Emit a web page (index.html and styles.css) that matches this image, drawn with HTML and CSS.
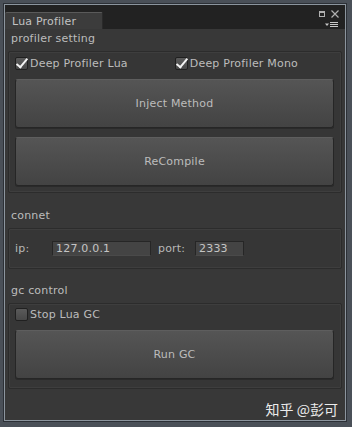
FILE: index.html
```html
<!DOCTYPE html>
<html lang="en">
<head>
    <meta charset="UTF-8">
    <title>Lua Profiler</title>
    <link rel="stylesheet" href="styles.css">
</head>
<body>
    <div class="window">
        <div class="header">
            <div class="tab">Lua Profiler</div>
            <div class="controls">
                <div class="ctrl-top">
                    <span class="max-box"></span>
                    <svg class="close" width="8" height="8" viewBox="0 0 8 8"><path d="M0.5 0.5 L7.5 7.5 M7.5 0.5 L0.5 7.5" stroke="#b0b0b0" stroke-width="1.2"/></svg>
                </div>
                <svg class="menu" width="14" height="6" viewBox="0 0 14 6"><path d="M0 1.5 L4 1.5 L2 4 Z" fill="#c8c8c8"/><path d="M5 0.5 H13 M5 2.5 H13 M5 4.5 H13" stroke="#c8c8c8" stroke-width="1"/></svg>
            </div>
        </div>
        <div class="content">
            <div class="label">profiler setting</div>
            <div class="group group-setting">
                <div class="check-row">
                    <label class="check"><span class="box on"></span>Deep Profiler Lua</label>
                    <label class="check mono"><span class="box on"></span>Deep Profiler Mono</label>
                </div>
                <button class="btn">Inject Method</button>
                <button class="btn">ReCompile</button>
            </div>

            <div class="label section">connet</div>
            <div class="group group-connect">
                <span class="field-label ip">ip:</span>
                <span class="input ip-input">127.0.0.1</span>
                <span class="field-label port">port:</span>
                <span class="input port-input">2333</span>
            </div>

            <div class="label section gc-label">gc control</div>
            <div class="group group-gc">
                <label class="check"><span class="box"></span>Stop Lua GC</label>
                <button class="btn">Run GC</button>
            </div>

            <div class="watermark">知乎 @彭可</div>
        </div>
    </div>
</body>
</html>
```

FILE: styles.css
```css
body {
    margin: 0;
    padding: 4px;
    background: #4a5058;
    font-family: 'DejaVu Sans', sans-serif;
    font-size: 11px;
    letter-spacing: 0.2px;
    color: #b8b8b8;
}
.window {
    width: 342px;
    height: 417px;
    border: 1px solid #8c959e;
    background: #383838;
    box-sizing: border-box;
    display: flex;
    flex-direction: column;
    box-shadow: 0 0 0 1px #2c3036;
}
.header {
    height: 24px;
    background: #222222;
    display: flex;
    justify-content: space-between;
    align-items: flex-end;
    flex-shrink: 0;
}
.tab {
    width: 98px;
    height: 17px;
    box-sizing: border-box;
    padding-left: 7px;
    line-height: 17px;
    background: #3c3c3c;
    border-top: 1px solid #5a5a5a;
    border-right: 1px solid #2a2a2a;
    border-radius: 2px 2px 0 0;
    color: #c2c2c2;
}
.controls {
    align-self: stretch;
    display: flex;
    flex-direction: column;
    align-items: flex-end;
    padding: 5px 6px 0 0;
}
.ctrl-top {
    display: flex;
    align-items: center;
    gap: 6px;
}
.max-box {
    width: 4px;
    height: 3px;
    border: 1px solid #b0b0b0;
    border-top-width: 2px;
}
.menu {
    margin-top: 4px;
}
.content {
    flex: 1;
    display: flex;
    flex-direction: column;
    padding: 2px 3px 0 3px;
}
.label {
    height: 16px;
    line-height: 16px;
    padding-left: 3px;
    color: #bcbcbc;
}
.section {
    margin-top: 15px;
}
.gc-label {
    margin-top: 14px;
}
.group {
    background: #363636;
    border: 1px solid #2c2c2c;
    box-shadow: inset 0 0 0 1px #3e3e3e;
    border-radius: 2px;
    margin-top: 4px;
    flex-shrink: 0;
}
.group-setting {
    height: 142px;
    box-sizing: border-box;
    padding: 3px 7px 0 6px;
    display: flex;
    flex-direction: column;
}
.check-row {
    display: flex;
    height: 16px;
    margin-bottom: 8px;
}
.check {
    display: flex;
    align-items: center;
    height: 16px;
    color: #bcbcbc;
}
.mono {
    margin-left: 47px;
}
.box {
    width: 11px;
    height: 11px;
    margin-right: 2px;
    border: 1px solid #202020;
    border-radius: 2px;
    background: linear-gradient(#5a5a5a, #484848);
    position: relative;
}
.box.on::after {
    content: "";
    position: absolute;
    left: 3px;
    top: -2px;
    width: 4px;
    height: 10px;
    border-right: 2px solid #f2f2f2;
    border-bottom: 2px solid #f2f2f2;
    transform: rotate(40deg);
}
.btn {
    display: block;
    width: 100%;
    height: 49px;
    margin: 0 0 9px 0;
    padding: 0;
    font-family: 'DejaVu Sans', sans-serif;
    font-size: 11px;
    letter-spacing: 0.2px;
    color: #bcbcbc;
    background: linear-gradient(#555555, #434343);
    border: 1px solid #262626;
    border-top-color: #5e5e5e;
    border-radius: 3px;
    box-shadow: 0 1px 0 #2a2a2a;
    flex-shrink: 0;
}
.group-connect {
    height: 41px;
    box-sizing: border-box;
    display: flex;
    align-items: center;
    padding-left: 6px;
}
.field-label {
    color: #b8b8b8;
}
.ip {
    width: 37px;
}
.input {
    height: 15px;
    box-sizing: border-box;
    line-height: 13px;
    padding-left: 3px;
    background: #444444;
    border: 1px solid #262626;
    border-bottom-color: #4a4a4a;
    color: #c4c4c4;
}
.ip-input {
    width: 99px;
    margin-right: 7px;
}
.port {
    width: 37px;
}
.port-input {
    width: 49px;
}
.group-gc {
    height: 86px;
    box-sizing: border-box;
    padding: 2px 7px 0 6px;
}
.group-gc .check {
    margin-bottom: 8px;
}
.group-gc .btn {
    margin: 0;
}
.watermark {
    margin-top: 10px;
    text-align: right;
    padding-right: 4px;
    font-family: 'Noto Sans CJK SC', sans-serif;
    font-size: 14px;
    letter-spacing: 0;
    color: #ececec;
}
```
